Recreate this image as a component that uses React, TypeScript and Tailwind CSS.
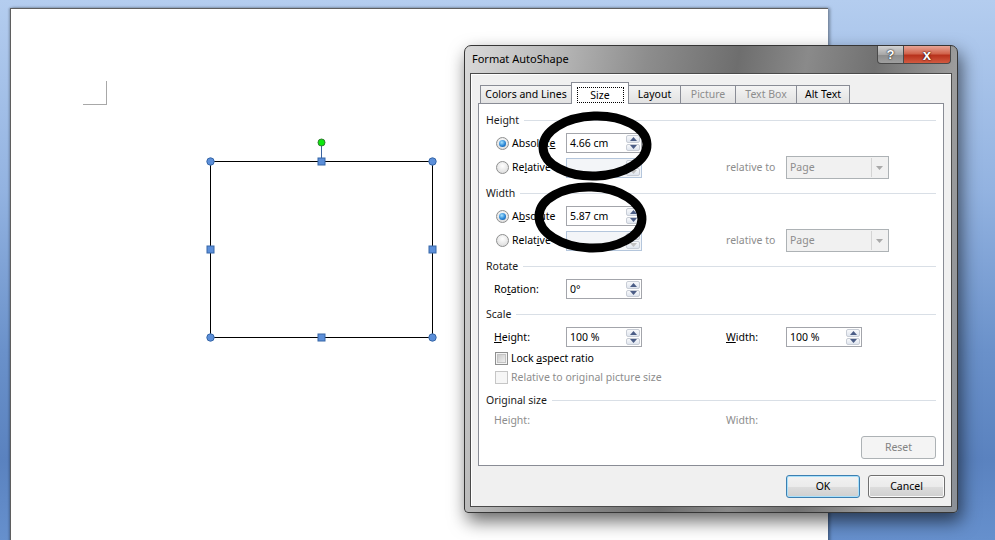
import type { ReactNode } from 'react';

function Radio({ checked }: { checked?: boolean }) {
  return (
    <span className="flex h-[13px] w-[13px] shrink-0 items-center justify-center rounded-full border border-[#8e8f8f] bg-[radial-gradient(circle_at_50%_35%,#ffffff,#d6d6d6)]">
      {checked && (
        <span className="h-[7px] w-[7px] rounded-full bg-[radial-gradient(circle_at_40%_35%,#a8e4ff,#2a86d6_55%,#0d4c8f)]" />
      )}
    </span>
  );
}

function Check({ disabled }: { disabled?: boolean }) {
  return disabled ? (
    <span className="h-[13px] w-[13px] shrink-0 border border-[#c6c6c6] bg-[#f6f6f6]" />
  ) : (
    <span className="flex h-[13px] w-[13px] shrink-0 items-center justify-center border border-[#8e8f8f] bg-[#f4f4f4]">
      <span className="h-[9px] w-[9px] border border-[#c4c4c4] bg-[linear-gradient(135deg,#cbcbcb,#eeeeee)]" />
    </span>
  );
}

function SpinBtn({ up, disabled }: { up?: boolean; disabled?: boolean }) {
  return (
    <span className="flex flex-1 items-center justify-center rounded-[2px] border border-[#c8cdd6] bg-[linear-gradient(#f8f9fb,#dfe5ee)]">
      <svg width="7" height="4" viewBox="0 0 7 4">
        <path d={up ? 'M0 4 L3.5 0 L7 4Z' : 'M0 0 L3.5 4 L7 0Z'} fill={disabled ? '#c2c2c2' : '#4b5d86'} />
      </svg>
    </span>
  );
}

function Spin({ value, disabled }: { value?: string; disabled?: boolean }) {
  return (
    <div
      className={`flex h-[20px] w-[76px] border ${
        disabled ? 'border-[#b4c6dc] bg-[#f3f5f8]' : 'border-[#a3a5ab] bg-white'
      }`}
    >
      <span className="flex flex-1 items-center pl-[3px] text-black">{value}</span>
      <span className="flex w-[15px] flex-col gap-px py-px pr-px">
        <SpinBtn up disabled={disabled} />
        <SpinBtn disabled={disabled} />
      </span>
    </div>
  );
}

function Dropdown() {
  return (
    <div className="flex h-[23px] w-[103px] border border-[#adb2b5] bg-[#f1f1f1]">
      <span className="flex flex-1 items-center pl-[3px] text-[#8d8d8d]">Page</span>
      <span className="my-px mr-px flex w-[16px] items-center justify-center border-l border-[#d4d4d4]">
        <svg width="7" height="4" viewBox="0 0 7 4">
          <path d="M0 0 L3.5 4 L7 0Z" fill="#a9a9a9" />
        </svg>
      </span>
    </div>
  );
}

function Header({ children }: { children: ReactNode }) {
  return (
    <div className="flex h-[16px] items-center pl-[7px] pr-[7px] text-[#1a1a1a]">
      <span>{children}</span>
      <span className="ml-[5px] h-px flex-1 bg-[#d9dfe6]" />
    </div>
  );
}

function Tab({ label, w, selected, disabled }: { label: string; w: string; selected?: boolean; disabled?: boolean }) {
  if (selected) {
    return (
      <div className={`relative z-10 -mb-px -ml-px flex h-[22px] ${w} items-start justify-center border border-b-0 border-[#898c95] bg-white pt-[4px]`}>
        <span className="flex h-[16px] w-[47px] items-center justify-center border border-dotted border-black text-black">
          {label}
        </span>
      </div>
    );
  }
  return (
    <div
      className={`-ml-px flex h-[18px] ${w} items-center justify-center border border-b-0 border-[#898c95] bg-[linear-gradient(#f4f4f4,#e2e2e2)] ${
        disabled ? 'text-[#8d8d8d]' : 'text-black'
      }`}
    >
      {label}
    </div>
  );
}

function Button({ children, variant }: { children: ReactNode; variant: 'default' | 'normal' | 'disabled' }) {
  const look =
    variant === 'default'
      ? 'border-[#3c7fb1] shadow-[inset_0_0_0_1px_#a8e0fb] bg-[linear-gradient(#f2f2f2_0%,#ebebeb_50%,#dddddd_51%,#cfcfcf_100%)] text-black'
      : variant === 'normal'
        ? 'border-[#707070] shadow-[inset_0_0_0_1px_#fbfbfb] bg-[linear-gradient(#f2f2f2_0%,#ebebeb_50%,#dddddd_51%,#cfcfcf_100%)] text-black'
        : 'border-[#adb2b5] bg-[#f4f4f4] text-[#838383]';
  return <div className={`flex h-[23px] items-center justify-center rounded-[3px] border ${look}`}>{children}</div>;
}

const row = 'grid h-[22px] grid-cols-[87px_76px_84px_60px_103px] items-center';

function Dialog() {
  return (
    <div className="absolute left-[464px] top-[45px] flex h-[468px] w-[494px] flex-col rounded-t-[7px] rounded-b-[4px] border border-[#363636] bg-[linear-gradient(100deg,#d9d9d9_0%,#b8b8b8_16%,#8d8d8d_32%,#6e6e6e_48%,#8a8a8a_60%,#717171_72%,#9c9c9c_86%,#8b9097_100%)] shadow-[3px_8px_18px_rgba(0,0,0,0.6)]">
      <div className="flex h-[27px] shrink-0 items-start pl-[7px] pr-[6px]">
        <span className="self-center pb-[1px] text-[11px] text-black">Format AutoShape</span>
        <div className="ml-auto flex h-[18px]">
          <div className="flex w-[27px] items-center justify-center rounded-bl-[4px] border border-t-0 border-[#4a4a4a] bg-[linear-gradient(#d2d2d2,#a8a8a8_50%,#8c8c8c_51%,#9f9f9f)] font-['Liberation_Sans',sans-serif] text-[13px] font-bold text-white [text-shadow:0_0_2px_#222,0_0_1px_#222]">
            ?
          </div>
          <div className="flex w-[47px] items-center justify-center rounded-br-[4px] border border-l-0 border-t-0 border-[#4a4a4a] bg-[linear-gradient(#e8a595,#d1644c_45%,#b8321c_55%,#d25a40)] font-['Liberation_Sans',sans-serif] text-[15px] font-bold leading-none text-white [text-shadow:0_0_2px_#3a0a00,0_0_1px_#3a0a00]">
            x
          </div>
        </div>
      </div>
      <div className="flex flex-1 px-[5px] pb-[5px]">
        <div className="flex flex-1 flex-col border border-[#4a4a4a] bg-[#f0f0f0] px-[7px] pt-[8px] text-[10.5px] leading-none shadow-[inset_1px_1px_0_#ffffff]">
          <div className="flex h-[21px] items-end pl-[3px]">
            <Tab label="Colors and Lines" w="w-[92px]" />
            <Tab label="Size" w="w-[58px]" selected />
            <Tab label="Layout" w="w-[53px]" />
            <Tab label="Picture" w="w-[56px]" disabled />
            <Tab label="Text Box" w="w-[62px]" disabled />
            <Tab label="Alt Text" w="w-[54px]" />
          </div>
          <div className="flex h-[363px] flex-col border border-[#898c95] bg-white">
            <div className="mt-[8px]">
              <Header>Height</Header>
            </div>
            <div className={`mt-[4px] ${row}`}>
              <div className="flex items-center gap-[3px] pl-[17px]">
                <Radio checked />
                <span>
                  Absolut<span className="underline">e</span>
                </span>
              </div>
              <Spin value="4.66 cm" />
            </div>
            <div className={`mt-[2px] ${row}`}>
              <div className="flex items-center gap-[3px] pl-[17px]">
                <Radio />
                <span>
                  Re<span className="underline">l</span>ative
                </span>
              </div>
              <Spin disabled />
              <span />
              <span className="text-[#8d8d8d]">relative to</span>
              <Dropdown />
            </div>
            <div className="mt-[7px]">
              <Header>Width</Header>
            </div>
            <div className={`mt-[4px] ${row}`}>
              <div className="flex items-center gap-[3px] pl-[17px]">
                <Radio checked />
                <span>
                  A<span className="underline">b</span>solute
                </span>
              </div>
              <Spin value="5.87 cm" />
            </div>
            <div className={`mt-[2px] ${row}`}>
              <div className="flex items-center gap-[3px] pl-[17px]">
                <Radio />
                <span>
                  Relat<span className="underline">i</span>ve
                </span>
              </div>
              <Spin disabled />
              <span />
              <span className="text-[#8d8d8d]">relative to</span>
              <Dropdown />
            </div>
            <div className="mt-[7px]">
              <Header>Rotate</Header>
            </div>
            <div className={`mt-[4px] ${row}`}>
              <span className="pl-[15px]">
                Ro<span className="underline">t</span>ation:
              </span>
              <Spin value="0°" />
            </div>
            <div className="mt-[6px]">
              <Header>Scale</Header>
            </div>
            <div className={`mt-[4px] ${row}`}>
              <span className="pl-[15px]">
                <span className="underline">H</span>eight:
              </span>
              <Spin value="100 %" />
              <span />
              <span>
                <span className="underline">W</span>idth:
              </span>
              <Spin value="100 %" />
            </div>
            <div className="mt-[2px] flex h-[16px] items-center gap-[3px] pl-[16px]">
              <Check />
              <span>
                Lock <span className="underline">a</span>spect ratio
              </span>
            </div>
            <div className="mt-[3px] flex h-[16px] items-center gap-[3px] pl-[16px] text-[#8d8d8d]">
              <Check disabled />
              <span>Relative to original picture size</span>
            </div>
            <div className="mt-[7px]">
              <Header>Original size</Header>
            </div>
            <div className="mt-[4px] grid h-[16px] grid-cols-[247px_100px] items-center text-[#8d8d8d]">
              <span className="pl-[15px]">Height:</span>
              <span>Width:</span>
            </div>
            <div className="mt-[8px] flex justify-end pr-[7px]">
              <div className="w-[75px]">
                <Button variant="disabled">Reset</Button>
              </div>
            </div>
          </div>
          <div className="mt-[9px] flex justify-end gap-[8px]">
            <div className="w-[74px]">
              <Button variant="default">OK</Button>
            </div>
            <div className="-mr-px w-[77px]">
              <Button variant="normal">Cancel</Button>
            </div>
          </div>
        </div>
      </div>
    </div>
  );
}

function Shape() {
  const corners = [
    [210, 161],
    [432, 161],
    [210, 337],
    [432, 337],
  ];
  const mids = [
    [321, 161],
    [210, 249],
    [432, 249],
    [321, 337],
  ];
  return (
    <svg className="absolute left-[190px] top-[125px]" width="250" height="215" viewBox="201 134 250 215">
      <rect x="210.5" y="161.5" width="222" height="176" fill="white" stroke="#000" strokeWidth="1" />
      <line x1="321.5" y1="145" x2="321.5" y2="158" stroke="#3b63a0" strokeWidth="1" />
      {corners.map(([x, y]) => (
        <circle key={`${x}-${y}`} cx={x + 0.5} cy={y + 0.5} r="3.7" fill="#5c8fd9" stroke="#3667a8" strokeWidth="1" />
      ))}
      {mids.map(([x, y]) => (
        <rect key={`${x}-${y}`} x={x - 3} y={y - 3} width="7" height="7" fill="#5c8fd9" stroke="#3667a8" strokeWidth="1" />
      ))}
      <circle cx="321.5" cy="142.5" r="3.5" fill="#0ee80e" stroke="#2f7a2f" strokeWidth="1" />
    </svg>
  );
}

export default function App() {
  return (
    <div className="relative h-[540px] w-[995px] overflow-hidden bg-[linear-gradient(180deg,#b4cdef_0%,#93b3e1_35%,#6a91ca_65%,#5a82bf_85%,#6690cd_100%)] font-['Noto_Sans',sans-serif]">
      <div className="pl-[10px] pt-[8px]">
        <div className="relative h-[540px] w-[818px] border-l border-t border-[#5f5f5f] bg-white shadow-[2px_0_3px_rgba(0,0,0,0.35),-1px_0_2px_rgba(0,0,0,0.25)]">
          <div className="absolute left-[72px] top-[72px] h-[24px] w-[24px] border-b border-r border-[#a8a8a8]" />
          <Shape />
        </div>
      </div>
      <Dialog />
      <svg className="pointer-events-none absolute inset-0" width="995" height="540" viewBox="0 0 995 540">
        <ellipse cx="595" cy="146" rx="52" ry="30" fill="none" stroke="#000" strokeWidth="9" transform="rotate(-2 595 146)" />
        <ellipse cx="590.5" cy="217.5" rx="51.5" ry="30.5" fill="none" stroke="#000" strokeWidth="9" transform="rotate(2 590 217)" />
      </svg>
    </div>
  );
}
